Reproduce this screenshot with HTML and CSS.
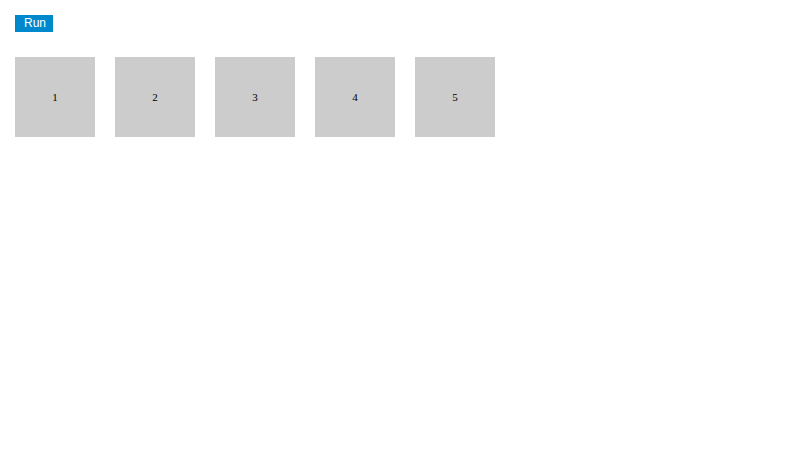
FILE: index.html
```html
<!DOCTYPE html>
<html>
<head>
<meta charset="utf-8">
<link rel="stylesheet" href="styles.css">
</head>
<body>
<button class="run">Run</button>
<div class="boxes">
  <div class="box">1</div>
  <div class="box">2</div>
  <div class="box">3</div>
  <div class="box">4</div>
  <div class="box">5</div>
</div>
</body>
</html>
```
FILE: styles.css
```css
html, body { margin: 0; padding: 0; background: #fff; }
body { padding: 15px; font-family: "Liberation Serif", serif; }
.run {
  display: block;
  margin: 0;
  border: 0;
  background: #0088cc;
  color: #fff;
  font-family: "Liberation Sans", Arial, sans-serif;
  font-size: 12px;
  line-height: 13px;
  padding: 2px 9px;
  height: 17px;
  width: 38px;
  text-align: center;
}
.boxes {
  display: flex;
  gap: 20px;
  margin-top: 25px;
}
.box {
  width: 80px;
  height: 80px;
  background: #cccccc;
  display: flex;
  align-items: center;
  justify-content: center;
  font-size: 11px;
  color: #000;
}
```
